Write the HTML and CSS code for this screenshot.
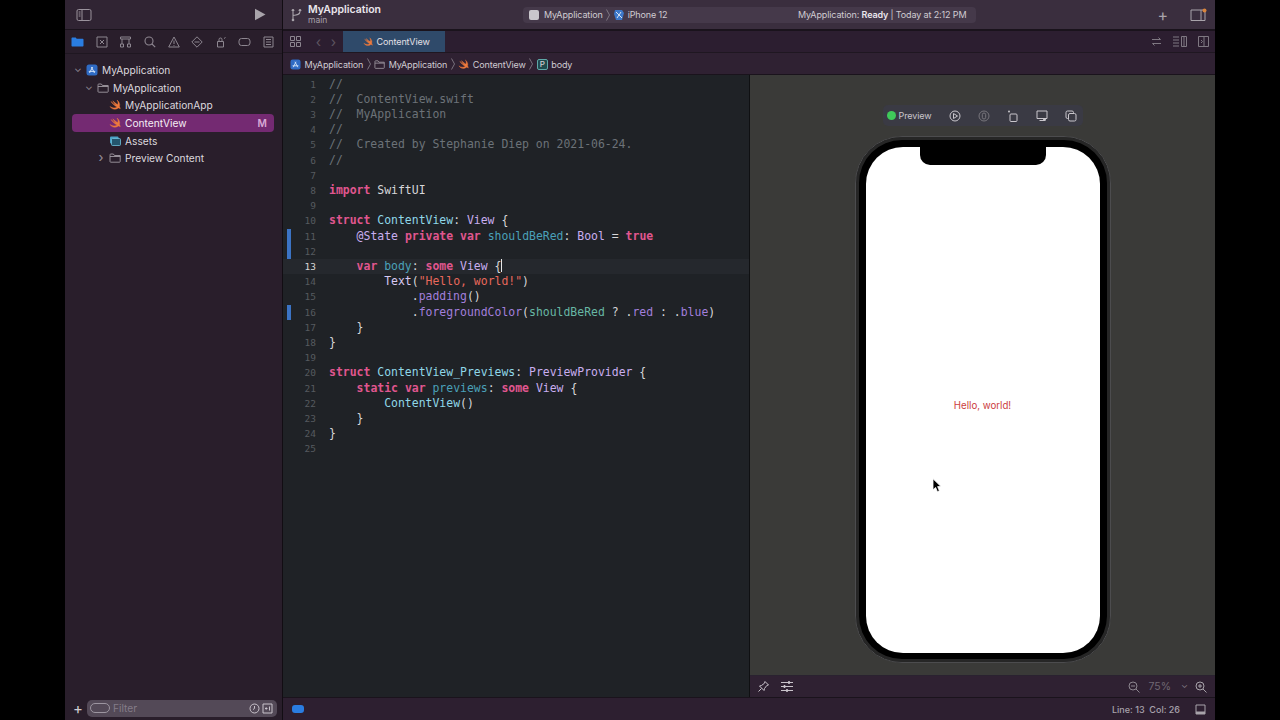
FILE: index.html
```html
<!DOCTYPE html>
<html lang="en">
<head>
  <meta charset="UTF-8">
  <title>MyApplication — ContentView.swift</title>
  <link rel="stylesheet" href="styles.css">
</head>
<body>
  <svg class="defs" width="0" height="0" aria-hidden="true">
    <symbol id="swift" viewBox="0 0 12 12">
      <path fill="#ee7a3c" stroke="#ee7a3c" stroke-width=".4" d="M1 7.5C3 9 6 9.5 8 8 6 7 3.5 5 2 2.5 3.5 4 5.5 5.5 7 6.3 5.5 4.800 4.500 3.300 3.800 1.800 5.500 3.500 7.500 5 8.700 5.500 9.300 4 9 2.500 8 1c2 1.500 3.300 4 2.500 6.500.5.700.8 1.500.7 2.500-.7-1-1.500-1.200-2.200-.8C6.500 11 3 10.500 1 7.500z"/>
    </symbol>
    <symbol id="folder" viewBox="0 0 12 12">
      <path fill="none" stroke="currentColor" stroke-width=".9" d="M1 3.500V2.800c0-.5.300-.8.800-.8h2.600l1 1.500h5.800v6c0 .4-.3.700-.7.700H1.700c-.4 0-.7-.3-.7-.7zM1 4.500h10.200"/>
    </symbol>
    <symbol id="appicon" viewBox="0 0 12 12">
      <rect x=".5" y=".5" width="11" height="11" rx="2.500" fill="#2f6bc4"/>
      <path fill="none" stroke="#cfe0f6" stroke-width="1" d="M3.500 9 6.600 3M8.500 9 5.400 3M2.800 7.400h6.400"/>
    </symbol>
    <symbol id="chev" viewBox="0 0 4 12">
      <path fill="none" stroke="#8d8690" stroke-width=".8" d="M.5.500 3.500 6 .5 11.500"/>
    </symbol>
  </svg>

  <div class="app">
    <aside class="sidebar">
      <div class="side-top">
        <svg class="ico" width="16" height="14" viewBox="0 0 16 14"><path fill="none" stroke="#9a929c" d="M2.500 1.500h11a1.500 1.500 0 0 1 1.500 1.500v8a1.500 1.500 0 0 1-1.500 1.500h-11A1.500 1.500 0 0 1 1 11V3a1.500 1.500 0 0 1 1.500-1.500zM6 1.500v11M2.700 4h1.800M2.700 6h1.800M2.700 8h1.800"/></svg>
        <svg class="ico" width="12" height="13" viewBox="0 0 12 13"><path fill="#a8a3aa" d="M1 .8 11.500 6.500 1 12.200z"/></svg>
      </div>
      <div class="side-tabs">
        <svg width="13" height="12" viewBox="0 0 13 12"><path fill="#2a7de1" d="M.5 2.500c0-.6.400-1 1-1h3.200l1 1.200h5.800c.6 0 1 .4 1 1v5.800c0 .6-.4 1-1 1h-10c-.6 0-1-.4-1-1z"/></svg>
        <svg width="12" height="12" viewBox="0 0 12 12"><path fill="none" stroke="#8d8690" d="M1 1h10v10H1zM4 4l4 4M8 4l-4 4"/></svg>
        <svg width="13" height="12" viewBox="0 0 13 12"><path fill="none" stroke="#8d8690" d="M1.500 1h10v2h-10zM3 3v5M10 3v5M1.500 8h3v3h-3zM8.500 8h3v3h-3z"/></svg>
        <svg width="12" height="12" viewBox="0 0 12 12"><path fill="none" stroke="#8d8690" stroke-width="1.100" d="M5 1a4 4 0 1 1 0 8 4 4 0 0 1 0-8zM8 8l3.200 3.200"/></svg>
        <svg width="12" height="12" viewBox="0 0 12 12"><path fill="none" stroke="#8d8690" d="M6 1 11.300 11H.7zM6 4.500V8M6 9v.8"/></svg>
        <svg width="12" height="12" viewBox="0 0 12 12"><path fill="none" stroke="#8d8690" d="M6 .8 11.200 6 6 11.200.8 6zM3.500 6h5"/></svg>
        <svg width="12" height="12" viewBox="0 0 12 12"><path fill="none" stroke="#8d8690" d="M2.500 5.500h6v5.500h-6zM4 5.500V3.500a1.500 1.500 0 0 1 3 0v2M9 2.500l1.500-1"/></svg>
        <svg width="13" height="12" viewBox="0 0 13 12"><rect x="1" y="2.500" width="11" height="7" rx="2.500" fill="none" stroke="#8d8690"/></svg>
        <svg width="11" height="12" viewBox="0 0 11 12"><path fill="none" stroke="#8d8690" d="M1 1h9v10H1zM3 3.500h5M3 6h5M3 8.500h5"/></svg>
      </div>
      <ul class="tree">
        <li class="row lvl0"><span class="disc">⌄</span><svg class="ticon"><use href="#appicon"/></svg>MyApplication</li>
        <li class="row lvl1"><span class="disc">⌄</span><svg class="ticon muted"><use href="#folder"/></svg>MyApplication</li>
        <li class="row lvl2"><svg class="ticon"><use href="#swift"/></svg>MyApplicationApp</li>
        <li class="row lvl2 selected"><svg class="ticon"><use href="#swift"/></svg>ContentView<span class="badge">M</span></li>
        <li class="row lvl2"><svg class="ticon" viewBox="0 0 12 12"><rect x="1" y="1.500" width="8.500" height="7" rx="1" fill="#4aa3c7"/><rect x="2.500" y="3.500" width="9" height="7" rx="1" fill="#24566e" stroke="#6fc0dc" stroke-width=".8"/></svg>Assets</li>
        <li class="row lvl1b"><span class="disc side">›</span><svg class="ticon muted"><use href="#folder"/></svg>Preview Content</li>
      </ul>
      <div class="side-foot">
        <span class="plus">+</span>
        <div class="filter">
          <span class="filter-chip"></span>
          <span class="filter-text">Filter</span>
          <svg width="11" height="11" viewBox="0 0 11 11"><path fill="none" stroke="#c9c3cb" d="M5.500 1a4.500 4.500 0 1 1 0 9 4.500 4.500 0 0 1 0-9zM5.500 3v2.500L4 6.500"/></svg>
          <svg width="11" height="11" viewBox="0 0 11 11"><path fill="none" stroke="#c9c3cb" d="M1 1h9v9H1zM3 5.500h2.500M4.200 4.300v2.400M7.500 3.500v4"/></svg>
        </div>
      </div>
    </aside>

    <div class="main">
      <header class="toolbar">
        <svg class="branch" width="11" height="14" viewBox="0 0 11 14"><path fill="none" stroke="#a8a3aa" stroke-width="1.100" d="M2 3.500v8M9 3.500c0 3-3 3.500-7 4"/><circle cx="2" cy="2.300" r="1.300" fill="#a8a3aa"/><circle cx="9" cy="2.300" r="1.300" fill="#a8a3aa"/><circle cx="2" cy="12" r="1.300" fill="#a8a3aa"/></svg>
        <div class="project">
          <strong>MyApplication</strong>
          <span>main</span>
        </div>
        <div class="activity">
          <div class="scheme">
            <span class="app-dot"></span><span>MyApplication</span><svg class="chev"><use href="#chev"/></svg>
            <svg class="ticon" viewBox="0 0 12 12"><path fill="#3d78c9" d="M2 1h7l2 3-2 7H3L1 5z"/><path stroke="#d7e4f5" d="M3 3l6 6M8 3 4 9"/></svg><span>iPhone 12</span>
          </div>
          <div class="status">MyApplication: <b>Ready</b> | Today at 2:12 PM</div>
        </div>
        <div class="tool-right">
          <span class="add">+</span>
          <svg width="18" height="14" viewBox="0 0 18 14"><path fill="none" stroke="#a8a3aa" d="M2 2h14v10.500H2zM12 2v10.500"/><circle cx="15.500" cy="2.500" r="2" fill="#d9843b"/></svg>
        </div>
      </header>

      <div class="tabbar">
        <svg width="11" height="11" viewBox="0 0 11 11"><path fill="none" stroke="#8d8690" d="M.5.500h4v4h-4zM6.500.500h4v4h-4zM.5 6.500h4v4h-4zM6.500 6.500h4v4h-4z"/></svg>
        <span class="nav nav-first">‹</span>
        <span class="nav">›</span>
        <div class="tab"><svg class="ticon"><use href="#swift"/></svg>ContentView</div>
        <div class="tab-tools">
          <svg width="11" height="11" viewBox="0 0 11 11"><path fill="none" stroke="#7f7882" d="M1 3.500h8.500L7.500 1.500M10 7.500H1.500l2 2"/></svg>
          <svg width="14" height="11" viewBox="0 0 14 11"><path fill="none" stroke="#7f7882" d="M0 1h6M0 4h6M0 7h6M0 10h6M8.500.500h5v10h-5zM11 .500v10"/></svg>
          <svg width="11" height="11" viewBox="0 0 11 11"><path fill="none" stroke="#7f7882" d="M.5.500h10v10H.5zM6 .500v10M3 4l1.500 1.500L3 7"/></svg>
        </div>
      </div>

      <nav class="jumpbar">
        <svg class="ticon"><use href="#appicon"/></svg><span>MyApplication</span><svg class="chev"><use href="#chev"/></svg>
        <svg class="ticon muted"><use href="#folder"/></svg><span>MyApplication</span><svg class="chev"><use href="#chev"/></svg>
        <svg class="ticon"><use href="#swift"/></svg><span>ContentView</span><svg class="chev"><use href="#chev"/></svg>
        <b class="prop">P</b><span>body</span>
      </nav>

      <div class="split">
        <section class="editor">
<div class="ln"><b class="mark"></b><span class="num">1</span><code class="c">//</code></div>
<div class="ln"><b class="mark"></b><span class="num">2</span><code class="c">//  ContentView.swift</code></div>
<div class="ln"><b class="mark"></b><span class="num">3</span><code class="c">//  MyApplication</code></div>
<div class="ln"><b class="mark"></b><span class="num">4</span><code class="c">//</code></div>
<div class="ln"><b class="mark"></b><span class="num">5</span><code class="c">//  Created by Stephanie Diep on 2021-06-24.</code></div>
<div class="ln"><b class="mark"></b><span class="num">6</span><code class="c">//</code></div>
<div class="ln"><b class="mark"></b><span class="num">7</span><code></code></div>
<div class="ln"><b class="mark"></b><span class="num">8</span><code><em>import</em> SwiftUI</code></div>
<div class="ln"><b class="mark"></b><span class="num">9</span><code></code></div>
<div class="ln"><b class="mark"></b><span class="num">10</span><code><em>struct</em> <u>ContentView</u>: <s>View</s> {</code></div>
<div class="ln changed"><b class="mark"></b><span class="num">11</span><code>    <s>@State</s> <em>private</em> <em>var</em> <u class="decl">shouldBeRed</u>: <s>Bool</s> = <em>true</em></code></div>
<div class="ln changed"><b class="mark"></b><span class="num">12</span><code></code></div>
<div class="ln current"><b class="mark"></b><span class="num">13</span><code>    <em>var</em> <u class="decl">body</u>: <em>some</em> <s>View</s> {<span class="caret"></span></code></div>
<div class="ln"><b class="mark"></b><span class="num">14</span><code>        <s class="t">Text</s>(<q>"Hello, world!"</q>)</code></div>
<div class="ln"><b class="mark"></b><span class="num">15</span><code>            .<s class="m">padding</s>()</code></div>
<div class="ln changed"><b class="mark"></b><span class="num">16</span><code>            .<s class="m">foregroundColor</s>(<u class="v">shouldBeRed</u> ? .<s class="m">red</s> : .<s class="m">blue</s>)</code></div>
<div class="ln"><b class="mark"></b><span class="num">17</span><code>    }</code></div>
<div class="ln"><b class="mark"></b><span class="num">18</span><code>}</code></div>
<div class="ln"><b class="mark"></b><span class="num">19</span><code></code></div>
<div class="ln"><b class="mark"></b><span class="num">20</span><code><em>struct</em> <u>ContentView_Previews</u>: <s>PreviewProvider</s> {</code></div>
<div class="ln"><b class="mark"></b><span class="num">21</span><code>    <em>static</em> <em>var</em> <u class="decl">previews</u>: <em>some</em> <s>View</s> {</code></div>
<div class="ln"><b class="mark"></b><span class="num">22</span><code>        <u>ContentView</u>()</code></div>
<div class="ln"><b class="mark"></b><span class="num">23</span><code>    }</code></div>
<div class="ln"><b class="mark"></b><span class="num">24</span><code>}</code></div>
<div class="ln"><b class="mark"></b><span class="num">25</span><code></code></div>
        </section>

        <section class="preview">
          <div class="canvas">
            <div class="preview-bar">
              <span class="live-dot"></span><span class="preview-label">Preview</span>
              <svg width="12" height="12" viewBox="0 0 12 12"><circle cx="6" cy="6" r="5" fill="none" stroke="#c9c6cc"/><path fill="none" stroke="#c9c6cc" d="M4.500 3.500 8.500 6l-4 2.500z"/></svg>
              <svg width="12" height="12" viewBox="0 0 12 12"><circle cx="6" cy="6" r="5" fill="none" stroke="#77757c"/><rect x="4.300" y="3" width="3.400" height="6" rx="1.700" fill="none" stroke="#77757c"/></svg>
              <svg width="12" height="12" viewBox="0 0 12 12"><rect x="3" y="4" width="7" height="7.500" rx="1" fill="none" stroke="#c9c6cc"/><circle cx="2" cy="1.500" r="1" fill="#c9c6cc"/></svg>
              <svg width="12" height="12" viewBox="0 0 12 12"><path fill="none" stroke="#c9c6cc" d="M1 1h10v7.500H1zM3.500 10.500h5"/><circle cx="8.500" cy="9.500" r="1.500" fill="#c9c6cc"/></svg>
              <svg width="12" height="12" viewBox="0 0 12 12"><rect x="1" y="1" width="7.500" height="7.500" rx="1.500" fill="none" stroke="#c9c6cc"/><rect x="3.500" y="3.500" width="7.500" height="7.500" rx="1.500" fill="#3a3a44" stroke="#c9c6cc"/></svg>
            </div>
            <div class="phone">
              <div class="notch"></div>
              <div class="screen"><span class="hello">Hello, world!</span></div>
            </div>
            <svg class="pointer" width="10" height="15" viewBox="0 0 10 15"><path fill="#000" stroke="#fff" stroke-width=".8" d="M1 .8v11l2.600-2.400 1.800 4.300 2-.9-1.800-4.200h3.400z"/></svg>
          </div>
          <div class="preview-foot">
            <svg width="13" height="13" viewBox="0 0 13 13"><path fill="none" stroke="#c9c3cb" d="M8 1.500 11.500 5 9.800 5.500 7.500 8.500 7 10.500 2.500 6 4.500 5.500 7.500 3.200zM4.500 8.500 1.500 11.500"/></svg>
            <svg width="12" height="11" viewBox="0 0 12 11"><path fill="none" stroke="#c9c3cb" d="M0 1.500h12M0 5.500h12M0 9.500h12"/><path stroke="#c9c3cb" stroke-width="1.600" d="M8 0v3M3.500 4v3M6 8v3"/></svg>
            <div class="zoom">
              <svg width="12" height="12" viewBox="0 0 12 12"><path fill="none" stroke="#8d8690" d="M5 1a4 4 0 1 1 0 8 4 4 0 0 1 0-8zM8 8l3.500 3.500M3 5h4"/></svg>
              <span class="zoom-val">75%</span>
              <span class="zoom-arrow">⌄</span>
              <svg width="12" height="12" viewBox="0 0 12 12"><path fill="none" stroke="#a8a3aa" d="M5 1a4 4 0 1 1 0 8 4 4 0 0 1 0-8zM8 8l3.500 3.500M3 5h4M5 3v4"/></svg>
            </div>
          </div>
        </section>
      </div>

      <footer class="statusbar">
        <span class="build-pill"></span>
        <span class="pos">Line: 13&nbsp; Col: 26</span>
        <svg width="11" height="11" viewBox="0 0 11 11"><path fill="none" stroke="#a8a3aa" d="M1 1h9v9H1z"/><path fill="#a8a3aa" d="M1 7.500h9V10H1z"/></svg>
      </footer>
    </div>
  </div>
</body>
</html>
```

FILE: styles.css
```css
* {
  box-sizing: border-box;
}

html, body {
  margin: 0;
  height: 100%;
  background: #000;
  overflow: hidden;
}

body {
  font-family: Inter, "Liberation Sans", sans-serif;
  font-size: 10.2px;
  color: #dcd8de;
}

.defs {
  position: absolute;
}

.app {
  display: flex;
  width: 1150px;
  height: 720px;
  margin-left: 65px;
  background: #2d1f30;
}

.ticon {
  width: 12px;
  height: 12px;
  flex: none;
}

.chev {
  width: 4px;
  height: 12px;
  flex: none;
}

.muted {
  color: #a09aa3;
}

/* sidebar */

.sidebar {
  display: flex;
  flex-direction: column;
  width: 218px;
  flex: none;
  background: #291e2b;
  border-right: 1px solid #120d13;
}

.side-top {
  display: flex;
  align-items: center;
  justify-content: space-between;
  height: 30px;
  padding: 0 16px 0 11px;
  background: #302433;
  border-bottom: 1px solid #1a131c;
}

.side-tabs {
  display: flex;
  align-items: center;
  justify-content: space-between;
  height: 24px;
  padding: 0 8px 0 6px;
  border-bottom: 1px solid #1f1721;
}

.tree {
  list-style: none;
  flex: 1;
  margin: 0;
  padding: 7.5px 8px 0 7px;
}

.row {
  display: flex;
  align-items: center;
  height: 17.6px;
  gap: 4px;
  color: #dcd8de;
  white-space: nowrap;
}

.lvl0 {
  padding-left: 2px;
}

.lvl1 {
  padding-left: 13px;
}

.lvl1b {
  padding-left: 25px;
}

.lvl2 {
  padding-left: 37px;
}

.disc {
  width: 8px;
  font-size: 10px;
  line-height: 8px;
  color: #9a929c;
  text-align: center;
  margin-top: -4px;
}

.disc.side {
  margin-top: -2px;
  font-size: 13px;
}

.selected {
  background: #742a72;
  border-radius: 4px;
  color: #f4eef5;
}

.badge {
  margin-left: auto;
  margin-right: 7px;
  font-weight: 600;
  color: #d9a9d6;
}

.side-foot {
  display: flex;
  align-items: center;
  gap: 4px;
  height: 22px;
  padding: 0 5px 2px 8px;
}

.plus {
  font-size: 15px;
  line-height: 15px;
  color: #d0ccd2;
}

.filter {
  display: flex;
  align-items: center;
  gap: 2px;
  flex: 1;
  height: 17px;
  padding: 0 4px 0 3px;
  border-radius: 5px;
  background: #534957;
}

.filter-chip {
  width: 20px;
  height: 10px;
  border: 1px solid #9c95a0;
  border-radius: 5px;
}

.filter-text {
  flex: 1;
  color: #847c88;
  margin-left: 1px;
}

/* main column */

.main {
  display: flex;
  flex-direction: column;
  flex: 1;
  min-width: 0;
}

.toolbar {
  display: flex;
  align-items: center;
  height: 31px;
  padding-left: 8px;
  background: #3a2e3e;
  border-bottom: 2px solid #1a131c;
}

.branch {
  flex: none;
  margin-right: 6px;
}

.project {
  display: flex;
  flex-direction: column;
  width: 215px;
  line-height: 11px;
}

.project strong {
  font-size: 10.5px;
  font-weight: 600;
  color: #eae6ec;
}

.project span {
  font-size: 8.5px;
  color: #a8a2ac;
}

.activity {
  display: flex;
  align-items: center;
  width: 453px;
  height: 16px;
  padding: 0 6px;
  border-radius: 4px;
  background: #45394a;
  font-size: 9px;
  letter-spacing: -.13px;
  color: #d0ccd2;
  white-space: nowrap;
}

.scheme {
  display: flex;
  align-items: center;
  gap: 3px;
  width: 268px;
  flex: none;
}

.app-dot {
  width: 10px;
  height: 10px;
  margin-right: 2px;
  border-radius: 2px;
  background: #c9c6cc;
}

.status {
  margin-left: 1px;
}

.status b {
  font-weight: 600;
  color: #eae6ec;
}

.tool-right {
  display: flex;
  align-items: center;
  gap: 21px;
  margin-left: auto;
  padding-right: 8px;
}

.add {
  font-size: 16px;
  line-height: 16px;
  color: #a8a3aa;
}

.tabbar {
  display: flex;
  align-items: center;
  height: 22px;
  padding-left: 7px;
  background: #2c1e30;
  border-bottom: 1px solid #1f1721;
}

.nav {
  width: 15px;
  font-size: 14px;
  line-height: 14px;
  text-align: center;
  color: #5d5560;
}

.nav-first {
  margin-left: 10px;
}

.tab {
  display: flex;
  align-items: center;
  gap: 3.5px;
  align-self: stretch;
  width: 102px;
  margin-left: 2px;
  padding-left: 20px;
  font-size: 9px;
  letter-spacing: -.1px;
  color: #e4e0e6;
  background: #2f4a6a;
}

.tab .ticon {
  width: 10px;
  height: 10px;
}

.tab-tools {
  display: flex;
  align-items: center;
  gap: 11px;
  margin-left: auto;
  padding-right: 6px;
}

.jumpbar {
  display: flex;
  align-items: center;
  height: 22px;
  padding: 1px 0 0 7px;
  gap: 3.5px;
  font-size: 9px;
  letter-spacing: -.13px;
  color: #d0ccd2;
  background: #2f2132;
  border-bottom: 1px solid #1a131c;
}

.jumpbar .ticon {
  width: 11px;
  height: 11px;
}

.prop {
  width: 11px;
  height: 11px;
  border: 1px solid #5fa8a8;
  border-radius: 2px;
  background: #1f4a4d;
  font-size: 8px;
  line-height: 9px;
  font-weight: 500;
  text-align: center;
}

.split {
  display: flex;
  flex: 1;
  min-height: 0;
}

/* code */

.editor {
  width: 467px;
  flex: none;
  padding-top: 1.5px;
  background: #1f2226;
  border-right: 1px solid #0f1012;
  font-family: "DejaVu Sans Mono", "Liberation Mono", monospace;
  font-size: 11.46px;
  line-height: 15.21px;
}

.ln {
  display: flex;
  height: 15.21px;
}

.mark {
  width: 4px;
  margin-left: 4px;
}

.changed .mark {
  background: #3b73c4;
}

.num {
  width: 25px;
  margin-right: 13px;
  text-align: right;
  font-size: 9.5px;
  color: #565a5f;
  flex: none;
}

.current {
  background: #25282d;
}

.current .num {
  color: #d8d8d8;
}

code {
  font-family: inherit;
  white-space: pre;
  color: #d7d7d9;
}

.c {
  color: #6c7278;
}

em {
  font-style: normal;
  font-weight: 700;
  color: #e0568f;
}

u {
  text-decoration: none;
  color: #8fd7e8;
}

u.decl {
  color: #4aa0b8;
}

u.v {
  color: #67b7a4;
}

s {
  text-decoration: none;
  color: #c9aef0;
}

s.m {
  color: #a27fdc;
}

s.t {
  color: #d7c9f2;
}

q {
  quotes: none;
  color: #e8695c;
}

.caret {
  display: inline-block;
  width: 1px;
  height: 13px;
  margin-bottom: -2px;
  background: #e8e8e8;
}

/* preview */

.preview {
  display: flex;
  flex-direction: column;
  flex: 1;
  min-width: 0;
}

.canvas {
  position: relative;
  display: flex;
  flex-direction: column;
  align-items: center;
  flex: 1;
  padding-top: 30px;
  background: #3a3a38;
}

.preview-bar {
  display: flex;
  align-items: center;
  gap: 17px;
  width: 200px;
  height: 21px;
  padding: 0 5px 0 4px;
  border-radius: 5px;
  background: #3a3a44;
}

.preview-bar svg {
  flex: none;
}

.live-dot {
  width: 9px;
  height: 9px;
  margin-right: -14px;
  border-radius: 50%;
  background: #3fc95a;
  flex: none;
}

.preview-label {
  width: 33px;
  flex: none;
  font-size: 9px;
  letter-spacing: -.1px;
  color: #c9c6cc;
}

.phone {
  position: relative;
  width: 256px;
  height: 527px;
  margin-top: 10px;
  padding: 11px;
  border: 1px solid #4c4c4e;
  border-radius: 47px;
  background: #000;
  box-shadow: inset 0 0 0 3px #262626;
}

.screen {
  display: flex;
  align-items: center;
  justify-content: center;
  margin: -1px;
  height: calc(100% + 3px);
  padding-top: 10px;
  border-radius: 37px;
  background: #fff;
}

.notch {
  position: absolute;
  top: 10px;
  left: 64px;
  width: 126px;
  height: 18px;
  border-radius: 0 0 10px 10px;
  background: #000;
}

.hello {
  font-size: 9.7px;
  color: #cc3d40;
}

.pointer {
  position: absolute;
  top: 403px;
  left: 182px;
}

.preview-foot {
  display: flex;
  align-items: center;
  gap: 11px;
  height: 22px;
  padding: 0 8px 0 7px;
  background: #2f2132;
  border-top: 1px solid #2a2230;
}

.zoom {
  display: flex;
  align-items: center;
  gap: 8px;
  margin-left: auto;
}

.zoom-val {
  font-size: 10.5px;
  color: #6f6873;
}

.zoom-arrow {
  font-size: 9px;
  line-height: 6px;
  margin: -4px -1px 0 2px;
  color: #7f7882;
}

.statusbar {
  display: flex;
  align-items: center;
  height: 23px;
  padding: 0 9px;
  background: #2d1f30;
  border-top: 1px solid #1a131c;
}

.build-pill {
  width: 12px;
  height: 8px;
  border-radius: 3px;
  background: #2a7de1;
}

.pos {
  margin-left: auto;
  margin-right: 15px;
  font-size: 9px;
  font-weight: 500;
  color: #a8a2ac;
}
```
